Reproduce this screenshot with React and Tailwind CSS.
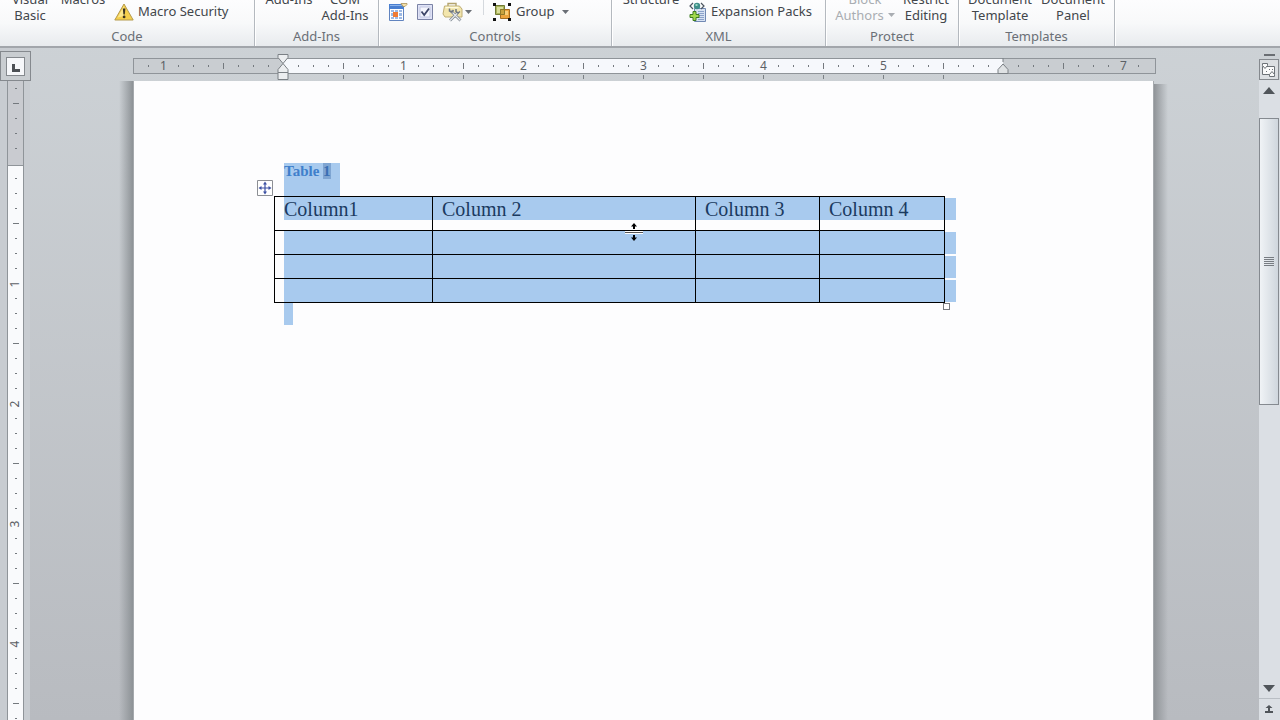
import { clsx } from 'clsx'

const COLUMNS = ['Column1', 'Column 2', 'Column 3', 'Column 4']
const EMPTY_ROWS = [1, 2, 3]

// eighths of an inch between two positions on a ruler
function range(from, to) {
  return Array.from({ length: to - from + 1 }, (_, i) => from + i)
}

function Mark({ eighth, vertical }) {
  const cell = clsx(
    'flex shrink-0 items-center justify-center text-[12px] leading-none text-[#5c6166]',
    vertical ? 'h-[15px] w-full' : 'h-full w-[15px]'
  )
  if (eighth % 8 === 0) {
    return (
      <span className={cell}>
        <span className={clsx(vertical && '-rotate-90')}>{Math.abs(eighth / 8)}</span>
      </span>
    )
  }
  if (eighth % 4 === 0) {
    return (
      <span className={cell}>
        <span className={clsx('bg-[#74797e]', vertical ? 'h-px w-[6px]' : 'h-[6px] w-px')} />
      </span>
    )
  }
  return (
    <span className={cell}>
      <span className={clsx('bg-[#74797e]', vertical ? 'h-px w-[2px]' : 'h-[2px] w-px')} />
    </span>
  )
}

function Caret({ className }) {
  return (
    <svg viewBox="0 0 7 4" className={clsx('h-1 w-[7px] shrink-0', className)} aria-hidden="true">
      <path d="M0 0h7L3.5 4z" fill="currentColor" />
    </svg>
  )
}

function Group({ label, className, children }) {
  return (
    <section
      aria-label={label}
      className={clsx(
        'flex h-full shrink-0 flex-col justify-end border-r border-[#b4b9bf] shadow-[1px_0_0_#ffffff]',
        className
      )}
    >
      <div className="flex items-end pb-[3px]">{children}</div>
      <div className="h-5 shrink-0 text-center leading-5 text-[#6a6f76]">{label}</div>
    </section>
  )
}

function LargeButton({ top, bottom, className, children }) {
  return (
    <button type="button" className={clsx('h-8 shrink-0 whitespace-nowrap text-center leading-4', className)}>
      <span className="block h-4">{top}</span>
      <span className="flex h-4 items-center justify-center">
        {bottom}
        {children}
      </span>
    </button>
  )
}

function SmallButton({ label, className, children }) {
  return (
    <button
      type="button"
      aria-label={label}
      className={clsx('flex h-[22px] shrink-0 items-center whitespace-nowrap', className)}
    >
      {children}
    </button>
  )
}

function WarningIcon() {
  return (
    <svg viewBox="0 0 20 18" className="h-[18px] w-5" aria-hidden="true">
      <path d="M10 1 19.2 17H.8z" fill="#f5cf4c" stroke="#b49a4e" strokeLinejoin="round" />
      <path d="M10 3 3.500 14.500 10 13z" fill="#fbe78d" />
      <path d="M8.800 5.500h2.600l-.6 6H9.400z" fill="#3b3421" />
      <circle cx="10.1" cy="13.900" r="1.400" fill="#3b3421" />
    </svg>
  )
}

function DatePickerIcon() {
  return (
    <svg viewBox="0 0 20 20" className="size-5" aria-hidden="true">
      <path d="M1.500 2.500h14v16h-14z" fill="#fff" stroke="#6184bf" />
      <path d="M1 2h15v5H1z" fill="#4a7fd0" />
      <path d="M2 3h12v1H2z" fill="#8db3ea" />
      <path d="M3 8h3v2H3zM7 8h3v2H7zM11 8h3v2h-3zM3 11h2v3H3zM11 11h3v3h-3zM3 15h3v2H3zM7 15h3v2H7zM11 15h3v2h-3z" fill="#9db9e4" />
      <path d="M5 10h5v5H5z" fill="#ee7a34" />
      <path d="M13 1.500h6v1l-2 2h-2z" fill="#f3dfa6" stroke="#a8905a" strokeWidth=".8" />
    </svg>
  )
}

function CheckBoxIcon() {
  return (
    <svg viewBox="0 0 16 16" className="size-4" aria-hidden="true">
      <path d="M.5.5h15v15H.5z" fill="#dfe2f6" stroke="#7b83a6" />
      <path d="M3 3h10v10H3z" fill="#f4f5fd" stroke="#c3c8e2" />
      <path d="m4.500 7.500 2.700 3.500L12 4.500" fill="none" stroke="#3d4568" strokeWidth="1.800" />
    </svg>
  )
}

function LegacyToolsIcon() {
  return (
    <svg viewBox="0 0 21 20" className="h-5 w-[21px]" aria-hidden="true">
      <path d="M6 4V1.500h8V4" fill="none" stroke="#b3a36e" strokeWidth="1.400" />
      <path d="M2.500 4h15l2.500 3v8H3l-2-3z" fill="#f3e6ad" stroke="#bfae74" />
      <path d="M3.500 5.500h13" stroke="#fffbe0" strokeWidth="1.400" />
      <path d="m8 18.500 8-8m2.500 8L9 9" stroke="#7b828c" strokeWidth="2.600" />
      <path d="m8 18.500 8-8m2.500 8L9 9" stroke="#e6eaee" strokeWidth="1.200" />
      <path d="M7.500 6.500V9l2.500 1 1.500-2M14 7v2.500l2 1.500 2-1.500" fill="none" stroke="#6f7782" strokeWidth="1.500" />
    </svg>
  )
}

function GroupIcon() {
  return (
    <svg viewBox="0 0 20 20" className="size-5" aria-hidden="true">
      <path d="M3.500 3.500h9v9h-9z" fill="#a9b45b" stroke="#727a35" />
      <path d="M5 5h6v6H5z" fill="#d9dd9b" />
      <path d="M8.500 7.500h9v9h-9z" fill="#eda43c" stroke="#a46c20" />
      <path d="M8.500 7.500h4v5h-4z" fill="#c9a33f" stroke="#8f7a2a" />
      <path d="M13 9h3v4h-3z" fill="#f9cf78" />
      <path d="M1 1h3v3H1zM16 1h3v3h-3zM1 16h3v3H1zM16 16h3v3h-3z" fill="#111" />
    </svg>
  )
}

function ExpansionPackIcon() {
  return (
    <svg viewBox="0 0 18 20" className="h-5 w-[18px]" aria-hidden="true">
      <path d="M5.500 6.500h11v13h-11z" fill="#d7e2f3" stroke="#7189b3" />
      <path d="M9 9.500h6M9 11.500h6M9 13.500h6M9 15.500h6M9 17.500h6" stroke="#8ba2ca" />
      <path d="M4 1 1 4l3 3M12 1l3 3-3 3" fill="none" stroke="#4c5560" strokeWidth="1.200" />
      <circle cx="8" cy="4" r="3.200" fill="#3f8f8a" />
      <path d="M6.500 2h2v2h-2z" fill="#9bd6c0" />
      <path d="M4 9.500h3v3h3v3H7v3H4v-3H1v-3h3z" fill="#a3d94f" stroke="#3f7d22" />
    </svg>
  )
}

function Ribbon() {
  return (
    <header className="flex h-12 shrink-0 overflow-hidden border-b-2 border-[#a2a6ab] bg-linear-to-b from-[#fdfdfe] via-[#f8f9fa] to-[#e8ebee] text-[13px] text-[#42464b]">
      <Group label="Code" className="w-[255px]">
        <LargeButton top="Visual" bottom="Basic" className="ml-2 w-11" />
        <LargeButton top="Macros" className="ml-1 w-[54px]" />
        <SmallButton className="ml-1 gap-1">
          <WarningIcon />
          Macro Security
        </SmallButton>
      </Group>
      <Group label="Add-Ins" className="w-[124px]">
        <LargeButton top="Add-Ins" className="ml-1.5 w-14" />
        <LargeButton top="COM" bottom="Add-Ins" className="w-14" />
      </Group>
      <Group label="Controls" className="w-[233px]">
        <SmallButton label="Date Picker" className="ml-[9px]">
          <DatePickerIcon />
        </SmallButton>
        <SmallButton label="Check Box" className="ml-[9px]">
          <CheckBoxIcon />
        </SmallButton>
        <SmallButton label="Legacy Tools" className="ml-[9px]">
          <LegacyToolsIcon />
          <Caret className="ml-0.5 text-[#6a6f76]" />
        </SmallButton>
        <span className="mb-2 ml-[11px] h-5 w-px bg-[#d5d9de]" />
        <SmallButton className="ml-2">
          <GroupIcon />
          <span className="ml-1">Group</span>
          <Caret className="ml-2 text-[#6a6f76]" />
        </SmallButton>
      </Group>
      <Group label="XML" className="w-[214px]">
        <LargeButton top="Structure" className="ml-2 w-[62px]" />
        <SmallButton className="ml-[7px] gap-1">
          <ExpansionPackIcon />
          Expansion Packs
        </SmallButton>
      </Group>
      <Group label="Protect" className="w-[133px]">
        <LargeButton top="Block" bottom="Authors" className="ml-2 w-[62px] text-[#a9adb2]">
          <Caret className="ml-1" />
        </LargeButton>
        <LargeButton top="Restrict" bottom="Editing" className="ml-1 w-[52px]" />
      </Group>
      <Group label="Templates" className="w-[156px]">
        <LargeButton top="Document" bottom="Template" className="ml-1 w-[74px]" />
        <LargeButton top="Document" bottom="Panel" className="w-[72px]" />
      </Group>
    </header>
  )
}

function HorizontalRuler() {
  return (
    <div className="relative h-[33px] shrink-0 pt-2.5">
      <div className="flex h-4 border border-[#8f9499]">
        <div className="flex w-[149px] bg-[#c9cdd1] pl-[7px]">
          {range(-9, -1).map((n) => (
            <Mark key={n} eighth={n} />
          ))}
        </div>
        <div className="flex w-[720px] bg-[#f6f8fc] pl-2">
          {range(1, 47).map((n) => (
            <Mark key={n} eighth={n} />
          ))}
        </div>
        <div className="flex flex-1 bg-[#c9cdd1] pl-2">
          {range(49, 57).map((n) => (
            <Mark key={n} eighth={n} />
          ))}
        </div>
      </div>
      {/* default tab stops, one each half inch */}
      <div className="flex pl-[180px]">
        {range(1, 11).map((n) => (
          <span key={n} className="flex w-[60px] justify-center pt-px">
            <span className="h-1 w-px bg-[#7c8186]" />
          </span>
        ))}
      </div>
      <svg viewBox="0 0 12 27" className="absolute top-1.5 left-36 h-[27px] w-3" aria-hidden="true">
        <path d="M1 .5h10v3L6 9.500 1 3.500z" fill="#eceef0" stroke="#7b8085" />
        <path d="M6 9.500 11 15.500v10H1v-10z" fill="#eceef0" stroke="#7b8085" />
        <path d="M1 18.500h10" stroke="#7b8085" />
      </svg>
      <svg viewBox="0 0 12 16" className="absolute top-2.5 left-[864px] h-4 w-3" aria-hidden="true">
        <path d="M6 0v4" stroke="#7b8085" />
        <path d="M6 6 11 11.500v4H1v-4z" fill="#dfe2e4" stroke="#7b8085" />
      </svg>
    </div>
  )
}

function LeftColumn() {
  return (
    <div className="flex w-[30px] shrink-0 flex-col bg-[#c8ccd1] pt-[3px]">
      <button
        type="button"
        aria-label="Tab selector"
        className="flex h-[30px] w-[31px] shrink-0 items-center justify-center border border-[#85898e] bg-[#c9cdd1]"
      >
        <span className="flex size-[19px] items-end justify-center border border-[#85898e] bg-[#f6f7fa] pb-[3px]">
          <span className="size-2 border-b-3 border-l-3 border-[#4c5055]" />
        </span>
      </button>
      <div className="ml-[7px] flex min-h-0 w-[17px] flex-1 flex-col overflow-hidden border-x border-[#8f9499] bg-[#f9fafc]">
        <div className="h-[85px] shrink-0 border-b border-[#8f9499] bg-[#c9cbd0]">
          {range(-5, -1).map((n) => (
            <Mark key={n} eighth={n} vertical />
          ))}
        </div>
        <div className="pt-[5px]">
          {range(1, 60).map((n) => (
            <Mark key={n} eighth={n} vertical />
          ))}
        </div>
      </div>
    </div>
  )
}

function DocumentTable() {
  return (
    <div className="relative ml-[140px] w-[682px]">
      <table className="w-full table-fixed border-collapse text-left">
        <colgroup>
          <col className="w-[158px]" />
          <col className="w-[263px]" />
          <col className="w-[124px]" />
          <col className="w-[125px]" />
          <col className="w-3" />
        </colgroup>
        <thead>
          <tr className="h-[34px]">
            {COLUMNS.map((name, i) => (
              <th
                key={name}
                scope="col"
                className={clsx('border border-black p-0 align-top font-normal', i === 0 && 'pl-[9px]')}
              >
                <div
                  className={clsx(
                    'h-[23px] bg-[#a8caee] text-[20px] leading-6 text-[#1b3a60]',
                    i > 0 && 'pl-[9px]'
                  )}
                >
                  {name}
                </div>
              </th>
            ))}
            <td className="p-0 pt-px align-top">
              <div className="h-[22px] w-[11px] bg-[#a8caee]" />
            </td>
          </tr>
        </thead>
        <tbody>
          {EMPTY_ROWS.map((row) => (
            <tr key={row} className="h-6">
              {COLUMNS.map((name, i) => (
                <td key={name} className={clsx('border border-black p-0', i === 0 && 'pl-[9px]')}>
                  <div className="h-[23px] bg-[#a8caee]" />
                </td>
              ))}
              <td className="p-0">
                <div className="h-[22px] w-[11px] bg-[#a8caee]" />
              </td>
            </tr>
          ))}
        </tbody>
      </table>

      <svg viewBox="0 0 16 16" className="absolute -top-4 -left-[17px] size-4" aria-hidden="true">
        <path d="M.5.5h15v15H.5z" fill="#fff" stroke="#8c8f94" />
        <path d="M8 3v10M3 8h10" stroke="#3c51a3" strokeWidth="1.200" />
        <path d="M8 1.500 10 4.500H6zM8 14.500 6 11.500h4zM1.500 8 4.500 6v4zM14.500 8l-3 2V6z" fill="#3c51a3" />
      </svg>
      <span className="absolute top-full right-1.5 size-[7px] border border-[#777b80] bg-white" />
      <svg viewBox="0 0 20 20" className="absolute top-[26px] left-[350px] size-5" aria-hidden="true">
        <path d="M1 9.500h18M1 11.500h18" stroke="#fff" />
        <path d="M1 10.500h18" stroke="#555" />
        <path d="M10 1 13 4.500h-2V7H9V4.500H7zM10 19l3-3.500h-2V13H9v2.500H7z" fill="#000" />
      </svg>
    </div>
  )
}

function Page() {
  return (
    <div className="relative min-h-0 w-[1021px] flex-1">
      <div className="absolute inset-y-0 right-full w-3.5 bg-linear-to-l from-[#8d9296] to-transparent" />
      <div className="absolute top-[3px] bottom-0 left-full w-3.5 bg-linear-to-r from-[#909498] to-transparent" />
      <main className="relative h-full border-x border-[#a5a9ad] bg-[#fdfdfe] pt-[82px] font-['Liberation_Serif',serif]">
        <p className="ml-[150px] h-[33px] w-14 bg-[#a8caee] text-[15px] leading-4 font-bold whitespace-nowrap text-[#3f7fcb]">
          Table <span className="inline-block bg-[#7fa5d2] text-[#3a6fb3]">1</span>
        </p>
        <DocumentTable />
        <div className="ml-[150px] h-[22px] w-[9px] bg-[#a8caee]" />
      </main>
    </div>
  )
}

function ScrollBar() {
  return (
    <div className="flex w-[21px] shrink-0 flex-col pt-1.5">
      <span className="ml-[5px] h-0.5 w-[11px] shrink-0 bg-[#6a6e73]" />
      <button
        type="button"
        aria-label="View Ruler"
        className="mt-[3px] flex h-[21px] w-5 shrink-0 items-center justify-center border border-[#85898e] bg-[#dcdfe2]"
      >
        <svg viewBox="0 0 16 16" className="size-4" fill="#fafafa" stroke="#6d7277" aria-hidden="true">
          <path d="M1.500 4.500h12v8h-12z" />
          <path d="M1.500 1.500h5v2l-2.500 3-2.500-3z" />
          <path d="M8.500 14.500v-2l2.500-3 2.500 3v2z" />
          <path d="M8 7.500h1M11 7.500h1M5 9.500h1" />
        </svg>
      </button>
      <div className="flex min-h-0 flex-1 flex-col bg-[#dbdfe4]">
        <button type="button" aria-label="Scroll up" className="flex h-[38px] w-5 shrink-0 justify-center pt-[7px]">
          <svg viewBox="0 0 12 7" className="h-[7px] w-3" aria-hidden="true">
            <path d="M6 0 12 7H0z" fill="#50555a" />
          </svg>
        </button>
        <div className="flex h-[287px] w-5 shrink-0 flex-col items-center justify-center gap-px border border-[#858a90] bg-linear-to-r from-[#f0f3f6] to-[#cfd6dd]">
          <span className="h-px w-2.5 bg-[#777c82]" />
          <span className="h-px w-2.5 bg-[#777c82]" />
          <span className="h-px w-2.5 bg-[#777c82]" />
          <span className="h-px w-2.5 bg-[#777c82]" />
          <span className="h-px w-2.5 bg-[#777c82]" />
        </div>
        <button
          type="button"
          aria-label="Scroll down"
          className="mt-auto flex h-[18px] w-full shrink-0 justify-center border-b border-[#b9bec4] pt-1 pr-px"
        >
          <svg viewBox="0 0 12 7" className="h-[7px] w-3" aria-hidden="true">
            <path d="M0 0h12L6 7z" fill="#50555a" />
          </svg>
        </button>
        <button type="button" aria-label="Previous page" className="flex h-[21px] w-5 shrink-0 justify-center pt-1.5">
          <svg viewBox="0 0 8 8" className="size-2" aria-hidden="true">
            <path d="M4 0 7.500 3H5v1h2.500L4 4 .5 4H3V3H.5zM3 4h2v2h3v2H0V6h3z" fill="#50555a" />
          </svg>
        </button>
      </div>
    </div>
  )
}

export default function App() {
  return (
    <div className="flex h-screen flex-col overflow-hidden bg-linear-to-b from-[#ced3d7] to-[#b8bbc0] font-['Noto_Sans','Open_Sans',sans-serif]">
      <Ribbon />
      <div className="flex min-h-0 flex-1">
        <LeftColumn />
        <div className="flex min-w-0 flex-1 justify-center overflow-hidden">
          <div className="flex w-[1023px] shrink-0 flex-col">
            <HorizontalRuler />
            <Page />
          </div>
        </div>
        <ScrollBar />
      </div>
    </div>
  )
}
